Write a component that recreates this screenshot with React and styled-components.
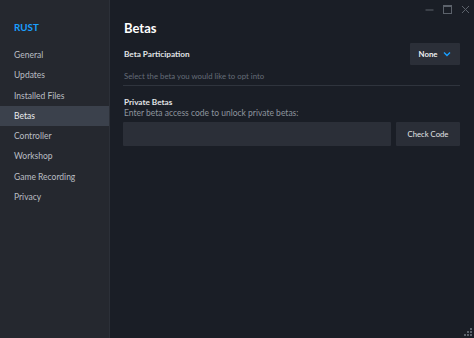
import React from "react";
import styled, { createGlobalStyle } from "styled-components";

const Global = createGlobalStyle`
  html, body { margin: 0; padding: 0; background: #1b1f27; }
  body { font-family: "Lato", "Noto Sans", sans-serif; }
  * { box-sizing: border-box; }
`;

const Window = styled.div`
  width: 474px;
  height: 338px;
  display: flex;
  position: relative;
  overflow: hidden;
  background: #1a1e26;
`;

const Sidebar = styled.nav`
  width: 110px;
  flex: none;
  background: #25282f;
  border-right: 1px solid #2c3038;
  display: flex;
  flex-direction: column;
  padding-top: 18px;
`;

const GameTitle = styled.div`
  color: #1a9fff;
  font-weight: 700;
  font-size: 9.8px;
  padding-left: 14px;
  height: 18px;
  line-height: 18px;
  margin-bottom: 9px;
`;

const NavItem = styled.div`
  height: 20.3px;
  line-height: 20.3px;
  padding-left: 14px;
  font-size: 8.5px;
  color: ${(p) => (p.$active ? "#eceef0" : "#babec3")};
  background: ${(p) => (p.$active ? "#3b414c" : "transparent")};
`;

const Main = styled.main`
  flex: 1;
  display: flex;
  flex-direction: column;
  padding: 17px 14px 0 13px;
`;

const Title = styled.h1`
  margin: 0;
  font-size: 13px;
  font-weight: 700;
  color: #ffffff;
  height: 20px;
  line-height: 22px;
  margin-bottom: 6px;
  padding-left: 1px;
`;

const Row = styled.div`
  display: flex;
  align-items: center;
  justify-content: space-between;
  height: 22px;
`;

const Label = styled.div`
  font-size: 8.2px;
  color: #e2e4e6;
  font-weight: 700;
  padding-left: 1px;
`;

const Dropdown = styled.div`
  height: 22px;
  width: 50px;
  background: #2b2f38;
  display: flex;
  align-items: center;
  justify-content: center;
  gap: 6px;
  color: #eef0f2;
  font-size: 7.8px;
  font-weight: 700;
  border-radius: 1px;
`;

const Hint = styled.div`
  font-size: 7.8px;
  color: #656d78;
  margin-top: 5px;
  height: 12px;
  line-height: 12px;
  padding-left: 1px;
`;

const Divider = styled.div`
  height: 1px;
  background: #2f343d;
  margin-top: 3px;
  margin-bottom: 10px;
`;

const SectionTitle = styled.div`
  font-size: 8.2px;
  font-weight: 700;
  color: #e2e4e6;
  line-height: 12px;
  padding-left: 1px;
`;

const SectionHint = styled.div`
  font-size: 8.5px;
  color: #8d949d;
  line-height: 11px;
  margin-bottom: 3px;
  padding-left: 1px;
`;

const InputRow = styled.div`
  display: flex;
  gap: 5px;
  height: 24px;
`;

const Input = styled.div`
  flex: 1;
  background: #2b2f38;
  border-radius: 1px;
`;

const Button = styled.div`
  width: 64px;
  background: #2a2e37;
  color: #e2e4e6;
  font-size: 7.7px;
  display: flex;
  align-items: center;
  justify-content: center;
  border-radius: 1px;
`;

const Controls = styled.div`
  position: absolute;
  top: 2px;
  right: 0;
  display: flex;
  align-items: center;
`;

const Ctrl = styled.div`
  width: 18px;
  height: 14px;
  display: flex;
  align-items: center;
  justify-content: center;
`;

const Grip = styled.svg`
  position: absolute;
  right: 2px;
  bottom: 2px;
`;

const items = [
  "General",
  "Updates",
  "Installed Files",
  "Betas",
  "Controller",
  "Workshop",
  "Game Recording",
  "Privacy",
];

export default function App() {
  return (
    <>
      <Global />
      <Window>
        <Sidebar>
          <GameTitle>RUST</GameTitle>
          {items.map((i) => (
            <NavItem key={i} $active={i === "Betas"}>
              {i}
            </NavItem>
          ))}
        </Sidebar>
        <Main>
          <Title>Betas</Title>
          <Row>
            <Label>Beta Participation</Label>
            <Dropdown>
              None
              <svg width="8" height="6" viewBox="0 0 8 6">
                <path d="M1 1.5 L4 4.5 L7 1.5" stroke="#1a9fff" strokeWidth="1.4" fill="none" />
              </svg>
            </Dropdown>
          </Row>
          <Hint>Select the beta you would like to opt into</Hint>
          <Divider />
          <SectionTitle>Private Betas</SectionTitle>
          <SectionHint>Enter beta access code to unlock private betas:</SectionHint>
          <InputRow>
            <Input />
            <Button>Check Code</Button>
          </InputRow>
        </Main>
        <Controls>
          <Ctrl>
            <svg width="9" height="9" viewBox="0 0 9 9">
              <path d="M0.5 5 H8.5" stroke="#5c626b" strokeWidth="1" />
            </svg>
          </Ctrl>
          <Ctrl>
            <svg width="9" height="9" viewBox="0 0 9 9">
              <rect x="0.5" y="0.5" width="8" height="8" stroke="#5c626b" fill="none" />
              <path d="M0.5 1.5 H8.5" stroke="#5c626b" strokeWidth="1" />
            </svg>
          </Ctrl>
          <Ctrl>
            <svg width="9" height="9" viewBox="0 0 9 9">
              <path d="M1 1 L8 8 M8 1 L1 8" stroke="#5c626b" strokeWidth="1" />
            </svg>
          </Ctrl>
        </Controls>
        <Grip width="8" height="8" viewBox="0 0 8 8">
          {[
            [6, 0],
            [6, 3],
            [3, 3],
            [6, 6],
            [3, 6],
            [0, 6],
          ].map(([x, y]) => (
            <rect key={x + "-" + y} x={x} y={y} width="2" height="2" fill="#5c626b" />
          ))}
        </Grip>
      </Window>
    </>
  );
}
